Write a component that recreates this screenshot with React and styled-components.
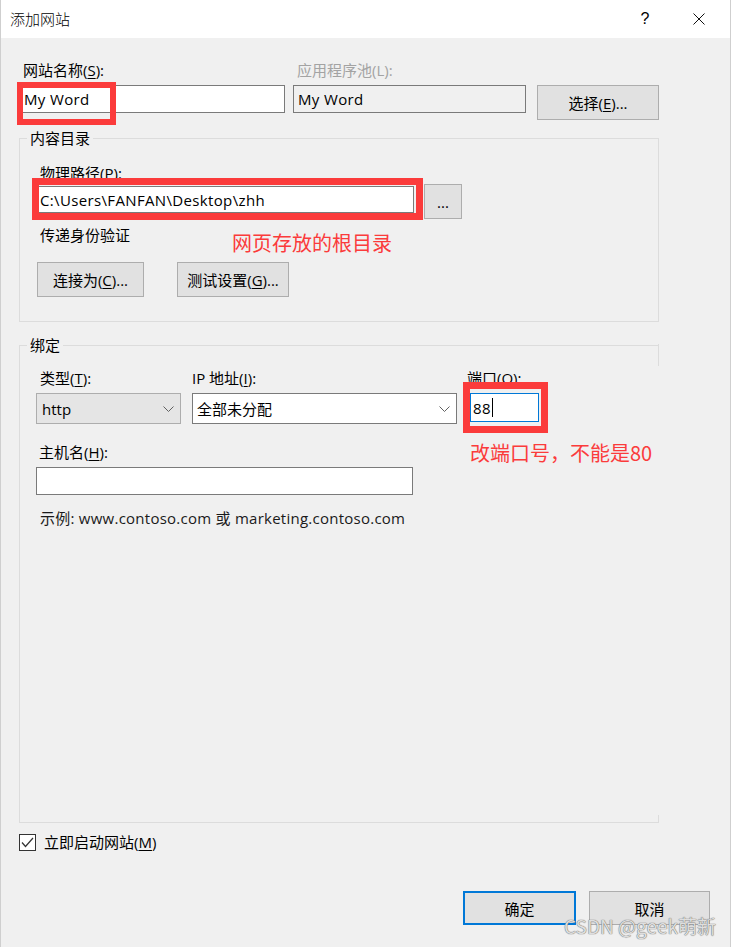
import React from 'react';
import styled, { createGlobalStyle } from 'styled-components';

const FONT = `"Open Sans", "Noto Sans CJK SC", sans-serif`;
const CJK = `"Noto Sans CJK SC", "Open Sans", sans-serif`;
const RED = '#fb3b3b';

const Global = createGlobalStyle`
  html, body { margin: 0; padding: 0; background: #f0f0f0; }
  body { font-family: ${FONT}; }
  * { box-sizing: border-box; }
  u { text-decoration-thickness: 1px; text-underline-offset: 2px; }
`;

const Window = styled.div`
  position: relative;
  width: 731px;
  height: 947px;
  overflow: hidden;
  background: #f0f0f0;
  border-left: 1px solid #cfcfcf;
  border-right: 1px solid #cfcfcf;
  font-family: ${FONT};
  font-size: 15px;
  color: #000;
`;

const TitleBar = styled.div`
  height: 38px;
  background: #fff;
  display: flex;
  align-items: center;
  padding: 0 8px 0 9px;
`;

const Title = styled.div`
  flex: 1;
  font-size: 15px;
  line-height: 20px;
  font-family: ${CJK};
  font-weight: 300;
`;

const TitleButton = styled.div`
  width: ${p => p.$w}px;
  height: 38px;
  display: flex;
  align-items: center;
  justify-content: center;
  margin-left: ${p => p.$ml || 0}px;
  font-size: 16px;
  font-family: "Liberation Sans", sans-serif;
`;

const Body = styled.div`
  display: flex;
  flex-direction: column;
  padding: 22px 0 0 18px;
`;

const TopRow = styled.div`
  display: flex;
  align-items: flex-start;
  padding-left: 1px;
`;

const Field = styled.div`
  display: flex;
  flex-direction: column;
  width: ${p => p.$w}px;
  margin-right: ${p => p.$mr || 0}px;
`;

const Label = styled.div`
  height: 20px;
  line-height: 20px;
  font-size: 15px;
  white-space: nowrap;
  padding-left: ${p => (p.$indent ?? 3)}px;
  margin-bottom: ${p => (p.$mb ?? 5)}px;
  margin-top: ${p => p.$mt || 0}px;
  color: ${p => (p.$disabled ? '#a3a3a3' : '#000')};
`;

const Marked = styled.div`
  position: relative;
  margin-left: ${p => p.$ml || 0}px;
  margin-top: ${p => p.$mt || 0}px;
`;

const TextBox = styled.div`
  width: ${p => p.$w}px;
  height: ${p => p.$h}px;
  display: flex;
  align-items: center;
  padding-left: ${p => p.$pad ?? 3}px;
  background: ${p => (p.$readonly ? '#f0f0f0' : '#fff')};
  border: 1px solid ${p => (p.$focus ? '#0078d7' : '#7a7a7a')};
  font-size: 15px;
  letter-spacing: 0.35px;
  white-space: nowrap;
  overflow: hidden;
`;

const Caret = styled.span`
  display: inline-block;
  width: 1px;
  height: 19px;
  background: #000;
  margin-left: 1px;
`;

const RedBox = styled.div`
  position: absolute;
  left: ${p => p.$l}px;
  top: ${p => p.$t}px;
  width: ${p => p.$w}px;
  height: ${p => p.$h}px;
  border: ${p => p.$b}px solid ${RED};
  pointer-events: none;
`;

const Button = styled.div`
  width: ${p => p.$w}px;
  height: ${p => p.$h || 35}px;
  margin-top: ${p => p.$mt || 0}px;
  margin-left: ${p => p.$ml || 0}px;
  display: flex;
  align-items: center;
  justify-content: center;
  background: #e1e1e1;
  border: ${p => (p.$default ? '2px solid #0078d7' : '1px solid #adadad')};
  font-size: 15px;
  white-space: nowrap;
`;

const Group = styled.fieldset`
  position: relative;
  width: 640px;
  height: ${p => (p.$h ? `${p.$h}px` : 'auto')};
  margin: ${p => p.$mt}px 0 0 0;
  padding: 0 0 ${p => p.$pb || 0}px 7px;
  border: 1px solid #dcdcdc;
  ${p => p.$brokenRight && `
    border-right: none;
    &::before {
      content: '';
      position: absolute;
      right: 0;
      top: -11px;
      width: 1px;
      height: 22px;
      background: #dcdcdc;
    }
    &::after {
      content: '';
      position: absolute;
      right: 0;
      top: 460px;
      width: 1px;
      height: 8px;
      background: #dcdcdc;
    }
  `}
`;

const Legend = styled.legend`
  padding: 0 3px;
  font-size: 15px;
  line-height: 20px;
`;

const GroupInner = styled.div`
  display: flex;
  flex-direction: column;
  padding-left: ${p => p.$pl}px;
  padding-top: ${p => p.$pt}px;
`;

const Row = styled.div`
  display: flex;
  align-items: flex-start;
  margin-top: ${p => p.$mt || 0}px;
  gap: ${p => p.$gap || 0}px;
`;

const AuthRow = styled.div`
  display: grid;
  grid-template-columns: 195px auto;
  align-items: start;
  margin-top: ${p => p.$mt || 0}px;
`;

const Note = styled.div`
  font-family: ${CJK};
  font-size: 20px;
  line-height: 26px;
  color: ${RED};
  white-space: nowrap;
  margin-top: ${p => p.$mt || 0}px;
  padding-left: ${p => p.$pl || 0}px;
`;

const BindGrid = styled.div`
  display: grid;
  grid-template-columns: 156px 275px 1fr;
  align-items: start;
`;

const Select = styled.div`
  width: ${p => p.$w}px;
  height: 31px;
  display: flex;
  align-items: center;
  justify-content: space-between;
  padding: 0 6px 0 ${p => p.$pl || 5}px;
  background: ${p => (p.$flat ? '#e5e5e5' : '#fff')};
  border: 1px solid ${p => (p.$flat ? '#adadad' : '#7a7a7a')};
  font-size: 15px;
`;

const Chevron = () => (
  <svg width="11" height="6" viewBox="0 0 11 6">
    <path d="M0.5 0.5 L5.5 5.5 L10.5 0.5" fill="none" stroke="#606060" strokeWidth="1" />
  </svg>
);

const HostLabel = styled(Label)`
  grid-column: 1 / 3;
`;

const Example = styled.div`
  margin-top: 13px;
  padding-left: 4px;
  line-height: 20px;
  font-size: 15px;
  letter-spacing: 0.25px;
  color: #1a1a1a;
  white-space: nowrap;
`;

const CheckRow = styled.label`
  display: flex;
  align-items: center;
  gap: 8px;
  margin-top: 11px;
  font-size: 15px;
  line-height: 17px;
`;

const CheckText = styled.span`
  white-space: nowrap;
`;

const CheckBox = styled.span`
  width: 17px;
  height: 17px;
  border: 1px solid #333;
  background: #fff;
  display: flex;
  align-items: center;
  justify-content: center;
`;

const Footer = styled.div`
  display: flex;
  justify-content: flex-end;
  gap: 13px;
  margin-top: 40px;
  padding-right: 20px;
`;

const Watermark = styled.div`
  position: absolute;
  left: 563px;
  top: 913px;
  font-family: ${CJK};
  font-size: 19px;
  line-height: 26px;
  color: #dedede;
  text-shadow: 0 0 1px #6e6e6e, 0 0 1px #6e6e6e;
  white-space: nowrap;
`;

export default function App() {
  return (
    <>
      <Global />
      <Window>
        <TitleBar>
          <Title>添加网站</Title>
          <TitleButton $w={30}>?</TitleButton>
          <TitleButton $w={46} $ml={16}>
            <svg width="12" height="12" viewBox="0 0 12 12">
              <path d="M0.5 0.5 L11.5 11.5 M11.5 0.5 L0.5 11.5" stroke="#111" strokeWidth="1" fill="none" />
            </svg>
          </TitleButton>
        </TitleBar>

        <Body>
          <TopRow>
            <Field $w={265} $mr={8}>
              <Label>网站名称(<u>S</u>):</Label>
              <Marked>
                <TextBox $w={265} $h={28} $pad={3}>My Word</TextBox>
                <RedBox $l={-3} $t={-3} $w={99} $h={43} $b={6} />
              </Marked>
            </Field>
            <Field $w={233} $mr={11}>
              <Label $disabled $indent={4}>应用程序池(L):</Label>
              <TextBox $w={233} $h={28} $pad={4} $readonly>My Word</TextBox>
            </Field>
            <Button $w={122} $mt={25}>选择(<u>E</u>)...</Button>
          </TopRow>

          <Group $mt={8} $pb={24}>
            <Legend>内容目录</Legend>
            <GroupInner $pl={10} $pt={15}>
              <Label>物理路径(<u>P</u>):</Label>
              <Row $mt={-4}>
                <Marked $ml={1} $mt={2}>
                  <TextBox $w={376} $h={27} $pad={1}>C:\Users\FANFAN\Desktop\zhh</TextBox>
                  <RedBox $l={-6} $t={-8} $w={391} $h={42} $b={7} />
                </Marked>
                <Button $w={38} $ml={10}>...</Button>
              </Row>
              <AuthRow $mt={6}>
                <Label $mb={0}>传递身份验证</Label>
                <Note $mt={5}>网页存放的根目录</Note>
              </AuthRow>
              <Row $mt={6} $gap={33}>
                <Button $w={107}>连接为(<u>C</u>)...</Button>
                <Button $w={112}>测试设置(<u>G</u>)...</Button>
              </Row>
            </GroupInner>
          </Group>

          <Group $mt={13} $h={488} $brokenRight>
            <Legend>绑定</Legend>
            <GroupInner $pl={9} $pt={13}>
              <BindGrid>
                <Label $indent={4}>类型(<u>T</u>):</Label>
                <Label $indent={0}>IP 地址(<u>I</u>):</Label>
                <Label $indent={0}>端口(<u>O</u>):</Label>

                <Select $w={145} $flat>
                  <span>http</span>
                  <Chevron />
                </Select>
                <Select $w={265} $pl={4}>
                  <span>全部未分配</span>
                  <Chevron />
                </Select>
                <Marked $ml={3}>
                  <TextBox $w={69} $h={29} $pad={2} $focus>
                    88<Caret />
                  </TextBox>
                  <RedBox $l={-7} $t={-11} $w={85} $h={51} $b={7} />
                </Marked>

                <HostLabel $mt={18} $mb={0}>主机名(<u>H</u>):</HostLabel>
                <Note $mt={16} $pl={3}>改端口号，不能是80</Note>
              </BindGrid>
              <Marked $mt={1}>
                <TextBox $w={377} $h={28}>&nbsp;</TextBox>
              </Marked>
              <Example>示例: www.contoso.com 或 marketing.contoso.com</Example>
            </GroupInner>
          </Group>

          <CheckRow>
            <CheckBox>
              <svg width="13" height="11" viewBox="0 0 13 11">
                <path d="M1 5.5 L4.5 9.5 L12 1" fill="none" stroke="#333" strokeWidth="1.2" />
              </svg>
            </CheckBox>
            <CheckText>立即启动网站(<u>M</u>)</CheckText>
          </CheckRow>

          <Footer>
            <Button $w={113} $h={34} $default>确定</Button>
            <Button $w={121} $h={34}>取消</Button>
          </Footer>
        </Body>
        <Watermark>CSDN @geek萌新</Watermark>
      </Window>
    </>
  );
}
